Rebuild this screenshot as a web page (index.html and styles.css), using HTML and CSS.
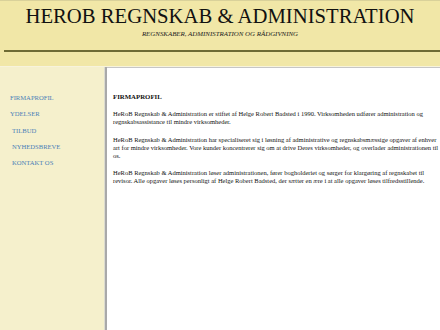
FILE: index.html
```html
<!DOCTYPE html>
<html lang="da">
<head>
<meta charset="utf-8">
<title>HeRoB Regnskab &amp; Administration</title>
<link rel="stylesheet" href="styles.css">
</head>
<body>
<div class="page">
  <header class="header">
    <h1 class="title">HEROB REGNSKAB &amp; ADMINISTRATION</h1>
    <div class="subtitle">REGNSKABER, ADMINISTRATION OG RÅDGIVNING</div>
    <div class="rule"></div>
  </header>
  <div class="main">
    <nav class="sidebar">
      <a class="nav-item" href="#">FIRMAPROFIL</a>
      <a class="nav-item" href="#">YDELSER</a>
      <a class="nav-item indent" href="#">TILBUD</a>
      <a class="nav-item indent" href="#">NYHEDSBREVE</a>
      <a class="nav-item indent" href="#">KONTAKT OS</a>
    </nav>
    <main class="content">
      <h2 class="heading">FIRMAPROFIL</h2>
      <p>HeRoB Regnskab &amp; Administration er stiftet af Helge Robert Badsted i 1990. Virksomheden udfører administration og regnskabsassistance til mindre virksomheder.</p>
      <p>HeRoB Regnskab &amp; Administration har specialiseret sig i løsning af administrative og regnskabsmæssige opgaver af enhver art for mindre virksomheder. Vore kunder koncentrerer sig om at drive Deres virksomheder, og overlader administrationen til os.</p>
      <p>HeRoB Regnskab &amp; Administration løser administrationen, fører bogholderiet og sørger for klargøring af regnskabet til revisor. Alle opgaver løses personligt af Helge Robert Badsted, der sætter en ære i at alle opgaver løses tilfredsstillende.</p>
    </main>
  </div>
</div>
</body>
</html>
```

FILE: styles.css
```css
html, body {
  margin: 0;
  padding: 0;
  height: 100%;
}
body {
  font-family: "Liberation Serif", "Times New Roman", serif;
  color: #111;
  background: #fff;
}
.page {
  display: flex;
  flex-direction: column;
  height: 100%;
}
.header {
  background: #f1e7a7;
  height: 66px;
  border-top: 1px solid #d9d19a;
  box-sizing: border-box;
  display: flex;
  flex-direction: column;
  align-items: center;
}
.title {
  margin: 4px 0 0 0;
  font-weight: normal;
  font-size: 20.7px;
  line-height: 23px;
  color: #111;
}
.subtitle {
  margin-top: 2px;
  font-style: italic;
  font-size: 6.9px;
  line-height: 7px;
  color: #222;
}
.rule {
  align-self: stretch;
  margin: 13px 0 0 4px;
  height: 2px;
  background: #6e6b34;
}
.main {
  flex: 1;
  display: flex;
  border-top: 1px solid #f7f3dc;
  box-shadow: inset 0 1px 0 #c6c6c6;
}
.sidebar {
  width: 107px;
  background: #f5f0cc;
  border-right: 2px solid #a9a9a9;
  box-shadow: inset -1px 0 0 #dcdcd0;
  display: flex;
  flex-direction: column;
  padding: 27px 0 0 10px;
  box-sizing: border-box;
  flex-shrink: 0;
}
.nav-item {
  font-size: 6.6px;
  line-height: 8px;
  color: #4a80b8;
  text-decoration: none;
  margin-bottom: 8.3px;
}
.nav-item.indent {
  padding-left: 2px;
}
.content {
  flex: 1;
  min-width: 0;
  padding: 26px 0 0 6px;
  font-size: 6.5px;
  line-height: 8px;
}
.heading {
  margin: 0 0 9px 0;
  font-size: 6.8px;
  line-height: 8px;
  font-weight: bold;
}
.content p {
  margin: 0 0 9.5px 0;
}
```
